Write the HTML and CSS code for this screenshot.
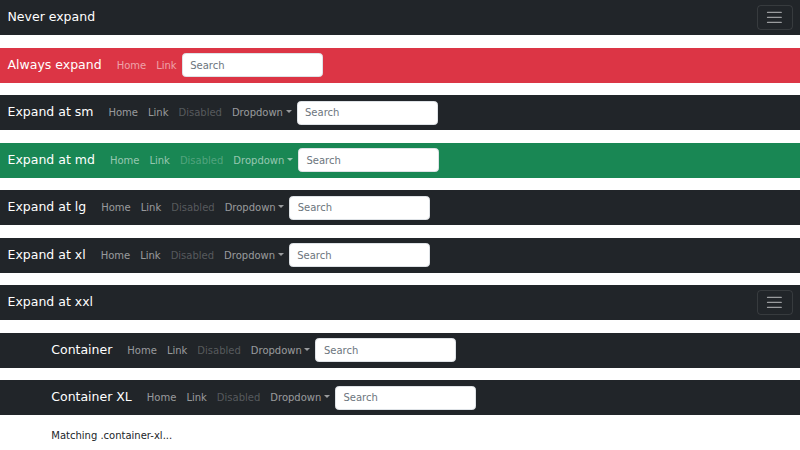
FILE: index.html
```html
<!DOCTYPE html>
<html lang="en">
<head>
<meta charset="utf-8">
<title>Navbars</title>
<link rel="stylesheet" href="styles.css">
</head>
<body>
<nav class="navbar bg-dark">
  <div class="fluid">
    <a class="brand" href="#">Never expand</a>
    <button class="toggler" type="button" aria-label="Toggle navigation"><svg class="toggler-icon" viewBox="0 0 30 30"><path d="M4 7h22M4 15h22M4 23h22" stroke="rgba(255,255,255,0.55)" stroke-width="2" stroke-linecap="round"/></svg></button>
  </div>
</nav>

<nav class="navbar bg-danger">
  <div class="fluid">
    <a class="brand" href="#">Always expand</a>
    <ul class="nav">
      <li><a class="link" href="#">Home</a></li>
      <li><a class="link" href="#">Link</a></li>
    </ul>
    <form role="search"><input class="search" type="search" placeholder="Search"></form>
  </div>
</nav>

<nav class="navbar bg-dark">
  <div class="fluid">
    <a class="brand" href="#">Expand at sm</a>
    <ul class="nav">
      <li><a class="link" href="#">Home</a></li>
      <li><a class="link" href="#">Link</a></li>
      <li><a class="link disabled">Disabled</a></li>
      <li><a class="link dropdown" href="#">Dropdown</a></li>
    </ul>
    <form role="search"><input class="search" type="search" placeholder="Search"></form>
  </div>
</nav>

<nav class="navbar bg-success">
  <div class="fluid">
    <a class="brand" href="#">Expand at md</a>
    <ul class="nav">
      <li><a class="link" href="#">Home</a></li>
      <li><a class="link" href="#">Link</a></li>
      <li><a class="link disabled">Disabled</a></li>
      <li><a class="link dropdown" href="#">Dropdown</a></li>
    </ul>
    <form role="search"><input class="search" type="search" placeholder="Search"></form>
  </div>
</nav>

<nav class="navbar bg-dark">
  <div class="fluid">
    <a class="brand" href="#">Expand at lg</a>
    <ul class="nav">
      <li><a class="link" href="#">Home</a></li>
      <li><a class="link" href="#">Link</a></li>
      <li><a class="link disabled">Disabled</a></li>
      <li><a class="link dropdown" href="#">Dropdown</a></li>
    </ul>
    <form role="search"><input class="search" type="search" placeholder="Search"></form>
  </div>
</nav>

<nav class="navbar bg-dark">
  <div class="fluid">
    <a class="brand" href="#">Expand at xl</a>
    <ul class="nav">
      <li><a class="link" href="#">Home</a></li>
      <li><a class="link" href="#">Link</a></li>
      <li><a class="link disabled">Disabled</a></li>
      <li><a class="link dropdown" href="#">Dropdown</a></li>
    </ul>
    <form role="search"><input class="search" type="search" placeholder="Search"></form>
  </div>
</nav>

<nav class="navbar bg-dark">
  <div class="fluid">
    <a class="brand" href="#">Expand at xxl</a>
    <button class="toggler" type="button" aria-label="Toggle navigation"><svg class="toggler-icon" viewBox="0 0 30 30"><path d="M4 7h22M4 15h22M4 23h22" stroke="rgba(255,255,255,0.55)" stroke-width="2" stroke-linecap="round"/></svg></button>
  </div>
</nav>

<nav class="navbar bg-dark">
  <div class="container">
    <a class="brand" href="#">Container</a>
    <ul class="nav">
      <li><a class="link" href="#">Home</a></li>
      <li><a class="link" href="#">Link</a></li>
      <li><a class="link disabled">Disabled</a></li>
      <li><a class="link dropdown" href="#">Dropdown</a></li>
    </ul>
    <form role="search"><input class="search" type="search" placeholder="Search"></form>
  </div>
</nav>

<nav class="navbar bg-dark">
  <div class="container">
    <a class="brand" href="#">Container XL</a>
    <ul class="nav">
      <li><a class="link" href="#">Home</a></li>
      <li><a class="link" href="#">Link</a></li>
      <li><a class="link disabled">Disabled</a></li>
      <li><a class="link dropdown" href="#">Dropdown</a></li>
    </ul>
    <form role="search"><input class="search" type="search" placeholder="Search"></form>
  </div>
</nav>

<div class="container">
  <p class="note">Matching .container-xl...</p>
</div>
</body>
</html>
```

FILE: styles.css
```css
* { box-sizing: border-box; }
html, body { margin: 0; padding: 0; }
body {
  font-family: "DejaVu Sans", sans-serif;
  font-size: 10px;
  line-height: 1.5;
  color: #212529;
  background: #fff;
  padding-bottom: 12.5px;
}
.navbar {
  padding: 5px 0;
  margin-bottom: 12.5px;
}
.bg-dark { background: #212529; }
.bg-danger { background: #dc3545; }
.bg-success { background: #198754; }
.fluid, .container {
  display: flex;
  align-items: center;
  padding: 0 7.5px;
}
.container {
  width: 712.5px;
  margin: 0 auto;
}
.fluid .toggler { margin-left: auto; }
.brand {
  font-size: 12.5px;
  line-height: 1.5;
  padding: 3.125px 0;
  margin-right: 10px;
  color: #fff;
  text-decoration: none;
  white-space: nowrap;
}
.nav {
  display: flex;
  list-style: none;
  margin: 0;
  padding: 0;
}
.link {
  display: block;
  padding: 5px;
  color: rgba(255,255,255,0.55);
  text-decoration: none;
}
.link.disabled { color: rgba(255,255,255,0.25); }
.dropdown::after {
  content: "";
  display: inline-block;
  margin-left: 2.55px;
  vertical-align: 2.55px;
  border-top: 3px solid;
  border-right: 3px solid transparent;
  border-left: 3px solid transparent;
}
form { margin: 0; }
.search {
  display: block;
  width: 141px;
  height: 24px;
  padding: 3.5px 7.5px;
  font-family: inherit;
  font-size: 10px;
  line-height: 1.5;
  color: #212529;
  background: #fff;
  border: 1px solid #dee2e6;
  border-radius: 3.75px;
  appearance: none;
  -webkit-appearance: none;
}
.search::placeholder { color: #6c757d; }
.toggler {
  display: flex;
  align-items: center;
  justify-content: center;
  height: 25px;
  padding: 2px 7.5px;
  background: transparent;
  border: 1px solid rgba(255,255,255,0.1);
  border-radius: 3.75px;
  line-height: 1;
}
.toggler-icon {
  display: block;
  width: 18.75px;
  height: 18.75px;
}
.note {
  margin: 0;
  color: #212529;
}
```
